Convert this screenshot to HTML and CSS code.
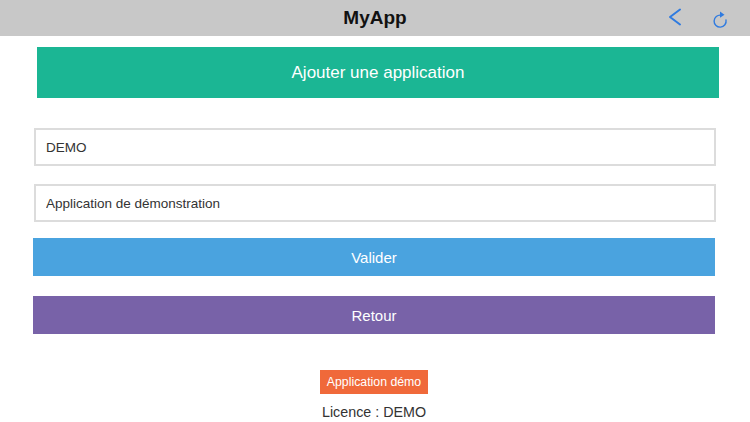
FILE: index.html
```html
<!DOCTYPE html>
<html lang="fr">
<head>
  <meta charset="UTF-8" />
  <meta name="viewport" content="width=device-width, initial-scale=1" />
  <title>MyApp</title>
  <link rel="stylesheet" href="styles.css">
</head>
<body>
  <header class="topbar">
    <div class="topbar-side"></div>
    <h1 class="topbar-title">MyApp</h1>
    <div class="topbar-side topbar-actions">
      <svg class="icon-back" width="16" height="18" viewBox="0 0 16 18" aria-label="Retour">
        <path d="M13 1.5 L3 9 L13 16.5" fill="none" stroke="#2f7be0" stroke-width="2" stroke-linecap="round" stroke-linejoin="round"/>
      </svg>
      <svg class="icon-reload" width="18" height="20" viewBox="0 0 18 20" aria-label="Recharger">
        <path d="M10 6.2 A6 6 0 1 0 15 11" fill="none" stroke="#2f7be0" stroke-width="1.4" stroke-linecap="round"/>
        <path d="M9 2.5 L13.5 5.8 L9 8.8 Z" fill="#2f7be0"/>
      </svg>
    </div>
  </header>

  <main class="content">
    <div class="banner">Ajouter une application</div>

    <form class="app-form" onsubmit="return false;">
      <input class="field" type="text" value="DEMO">
      <input class="field" type="text" value="Application de démonstration">
      <button class="btn btn-valider" type="submit">Valider</button>
      <button class="btn btn-retour" type="button">Retour</button>
    </form>

    <div class="footer-info">
      <span class="badge">Application démo</span>
      <p class="licence">Licence : DEMO</p>
    </div>
  </main>
</body>
</html>
```

FILE: styles.css
```css
body {
  margin: 0;
  font-family: 'Liberation Sans', Arial, sans-serif;
  background: #fff;
  color: #333;
}

.topbar {
  display: grid;
  grid-template-columns: 1fr auto 1fr;
  align-items: center;
  height: 36px;
  background: #c8c8c8;
}
.topbar-title {
  margin: 0;
  font-size: 19px;
  font-weight: 700;
  color: #111;
}
.topbar-actions {
  display: flex;
  justify-content: flex-end;
  align-items: center;
  gap: 28px;
  padding-right: 21px;
}
.icon-back { margin-top: -3px; }
.icon-reload { margin-top: 1px; }

.content {
  padding: 11px 35px 0 33px;
}

.banner {
  margin: 0 -4px 0 4px;
  height: 51px;
  display: flex;
  align-items: center;
  justify-content: center;
  background: #1bb694;
  color: #fff;
  font-size: 17px;
  font-weight: 300;
}

.app-form {
  display: flex;
  flex-direction: column;
  margin-top: 30px;
}
.field {
  box-sizing: border-box;
  height: 38px;
  margin: 0 -1px 18px 1px;
  padding: 0 10px;
  border: 2px solid #dcdcdc;
  border-radius: 0;
  font-family: inherit;
  font-size: 13.5px;
  color: #333;
  background: #fff;
}
.field:nth-child(2) { margin-bottom: 16px; }

.btn {
  height: 38px;
  border: none;
  color: #fff;
  font-family: inherit;
  font-size: 15px;
  cursor: pointer;
}
.btn-valider {
  background: #4aa3df;
  margin-bottom: 20px;
}
.btn-retour {
  background: #7862a8;
}

.footer-info {
  display: flex;
  flex-direction: column;
  align-items: center;
  margin-top: 36px;
}
.badge {
  background: #f0693a;
  color: #fff;
  font-size: 12.3px;
  padding: 5px 7px;
}
.licence {
  margin: 10px 0 0;
  font-size: 14.3px;
  color: #333;
}
```
